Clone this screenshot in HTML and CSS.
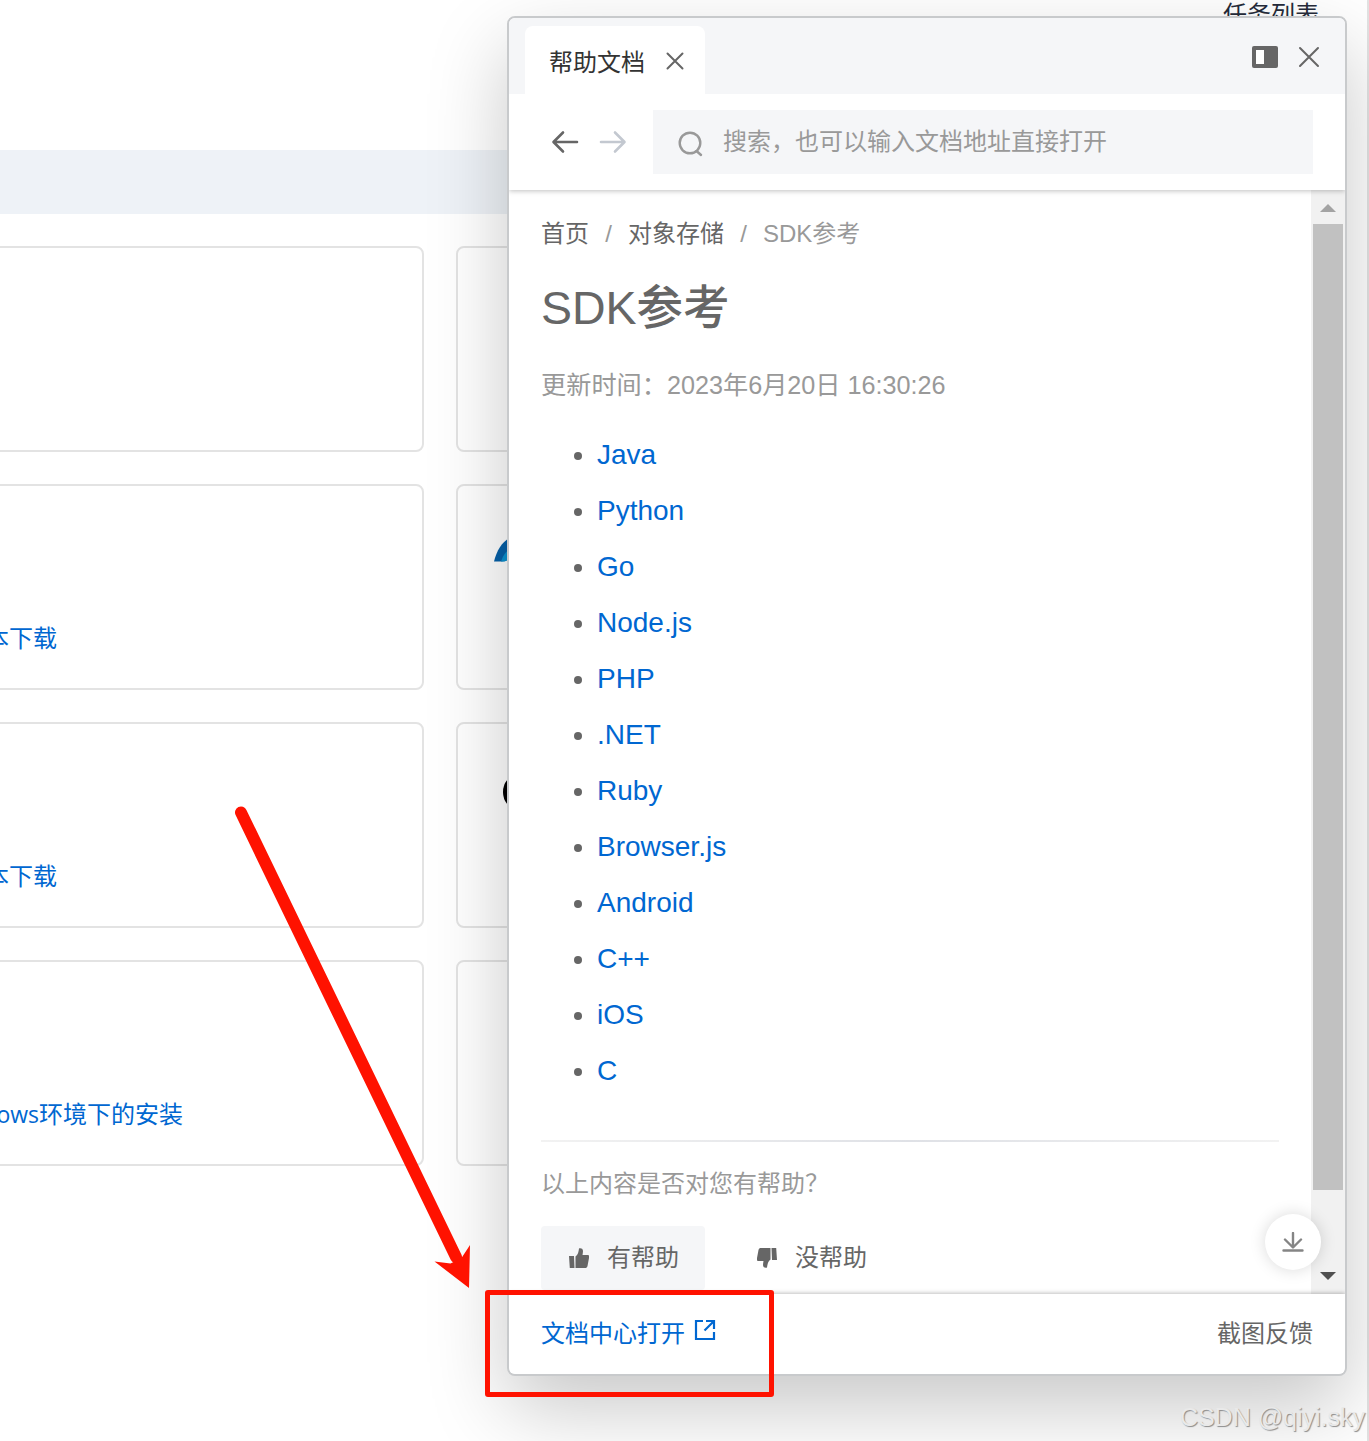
FILE: index.html
```
<!DOCTYPE html>
<html lang="zh-CN">
<head>
    <meta charset="UTF-8">
    <meta name="viewport" content="width=device-width, initial-scale=1.0">
    <title>帮助文档</title>
    <link rel="stylesheet" href="styles.css">
</head>
<body>
    <!-- Page behind the help window -->
    <main class="page">
        <header class="page-top">任务列表</header>
        <div class="band"></div>
        <div class="card-grid">
            <div class="card"></div>
            <div class="card"></div>
            <div class="card"><a class="card-link short">本下载</a></div>
            <div class="card">
                <svg class="card-logo" width="40" height="40" viewBox="0 0 40 40">
                    <path d="M0 23.500C3 12 8 3 18 -1V18C15 23 10 24 0 23.500Z" fill="#0560a8"/>
                    <path d="M7 23.500C9 18 11 14 18 9V18C14 23 11 24 7 23.500Z" fill="#0b91cf"/>
                </svg>
            </div>
            <div class="card"><a class="card-link short">本下载</a></div>
            <div class="card">
                <svg class="card-logo dark" width="34" height="34" viewBox="0 0 34 34"><ellipse cx="14" cy="17" rx="14" ry="17" fill="#000"/></svg>
            </div>
            <div class="card"><a class="card-link long"><span>ows</span>环境下的安装</a></div>
            <div class="card"></div>
        </div>
    </main>

    <!-- Help window -->
    <section class="help-window">
        <div class="tab-bar">
            <div class="tab">
                <span>帮助文档</span>
                <svg width="18" height="18" viewBox="0 0 18 18"><path d="M1.500 1.500l15 15M16.500 1.500l-15 15"/></svg>
            </div>
            <div class="window-actions">
                <svg width="26" height="22" viewBox="0 0 26 22"><rect width="26" height="22" rx="2" fill="#666"/><rect x="4" y="4" width="8" height="14" fill="#fff"/></svg>
                <svg class="close" width="22" height="22" viewBox="0 0 22 22"><path d="M2 2l18 18M20 2L2 20"/></svg>
            </div>
        </div>

        <div class="toolbar">
            <svg class="arrow" width="28" height="24" viewBox="0 0 28 24"><path d="M26 12H3M12 2.500L2.500 12l9.500 9.500"/></svg>
            <svg class="arrow disabled" width="28" height="24" viewBox="0 0 28 24"><path d="M2 12h23M16 2.500l9.500 9.500-9.500 9.500"/></svg>
            <div class="search">
                <svg width="26" height="26" viewBox="0 0 26 26"><circle cx="12" cy="12" r="10.300"/><path d="M18.500 20l4.500 4"/></svg>
                <span>搜索，也可以输入文档地址直接打开</span>
            </div>
        </div>

        <div class="content">
            <article class="doc">
                <nav class="breadcrumb">
                    <a>首页</a><i>/</i><a>对象存储</a><i>/</i><span>SDK参考</span>
                </nav>
                <h1>SDK参考</h1>
                <p class="updated">更新时间：2023年6月20日 16:30:26</p>
                <ul class="sdk-list">
                    <li><a>Java</a></li>
                    <li><a>Python</a></li>
                    <li><a>Go</a></li>
                    <li><a>Node.js</a></li>
                    <li><a>PHP</a></li>
                    <li><a>.NET</a></li>
                    <li><a>Ruby</a></li>
                    <li><a>Browser.js</a></li>
                    <li><a>Android</a></li>
                    <li><a>C++</a></li>
                    <li><a>iOS</a></li>
                    <li><a>C</a></li>
                </ul>
                <div class="divider"></div>
                <p class="question">以上内容是否对您有帮助？</p>
                <div class="votes">
                    <button class="vote active">
                        <svg width="20" height="20" viewBox="0 0 20 20"><path d="M0 8h5l.500 12H.800zM6.500 8.500C9 7 9.500 4 10 .500 11 0 14 0 14 3c0 1.500-.300 2.500-.500 4h5.500c1.200 0 1.200 1.500 1 3l-1.500 8c-.500 1.500-1 2-2.500 2H6.500z"/></svg>
                        <span>有帮助</span>
                    </button>
                    <button class="vote">
                        <svg width="20" height="20" viewBox="0 0 20 20"><g transform="rotate(180 10 10)"><path d="M0 8h5l.500 12H.800zM6.500 8.500C9 7 9.500 4 10 .500 11 0 14 0 14 3c0 1.500-.300 2.500-.500 4h5.500c1.200 0 1.200 1.500 1 3l-1.500 8c-.500 1.500-1 2-2.500 2H6.500z"/></g></svg>
                        <span>没帮助</span>
                    </button>
                </div>
            </article>
            <div class="scrollbar">
                <svg width="16" height="8" viewBox="0 0 16 8"><path d="M8 0l8 8H0z" fill="#a3a3a3"/></svg>
                <div class="thumb"></div>
                <svg class="down" width="16" height="8" viewBox="0 0 16 8"><path d="M0 0h16L8 8z" fill="#505050"/></svg>
            </div>
            <div class="to-bottom">
                <svg width="22" height="20" viewBox="0 0 22 20"><path d="M11 1v14M3 7.500l8 8 8-8M1.500 18.500h19"/></svg>
            </div>
        </div>

        <footer class="help-footer">
            <a class="open-doc"><span>文档中心打开</span>
                <svg width="22" height="22" viewBox="0 0 22 22"><path d="M9 2H2v18h18v-7M12 2h8v8M20 2l-9.500 9.500"/></svg>
            </a>
            <a class="feedback">截图反馈</a>
        </footer>
    </section>

    <!-- Markers -->
    <svg class="red-arrow" width="260" height="500" viewBox="0 0 260 500">
        <path d="M21 6.500L236 451" stroke="#ff1200" stroke-width="12" stroke-linecap="round"/>
        <path d="M214.500 449.500L230.500 451.500 241.500 446 250 433 249 476z" fill="#ff1200"/>
    </svg>
    <div class="red-box"></div>
    <div class="watermark">CSDN @qiyi.sky</div>
</body>
</html>
```
FILE: styles.css
```
* {
    margin: 0;
    padding: 0;
    box-sizing: border-box;
}

body {
    position: relative;
    width: 1369px;
    height: 1441px;
    overflow: hidden;
    background-color: #fff;
    font-family: "Liberation Sans", "Noto Sans CJK SC", sans-serif;
    font-size: 24px;
    color: #666;
}

svg {
    display: block;
    flex: none;
    fill: none;
}

/* Page behind */
.page {
    height: 1441px;
    border-right: 2px solid #e3e3e3;
}

.page-top {
    height: 150px;
    padding: 1px 48px 0 0;
    line-height: 28px;
    text-align: right;
    color: #252b3a;
}

.band {
    width: 1300px;
    height: 64px;
    background-color: #eef2f7;
}

.card-grid {
    display: grid;
    grid-template-columns: 432px 600px;
    grid-auto-rows: 206px;
    gap: 32px;
    margin: 32px 0 0 -8px;
}

.card {
    border: 2px solid #e3e3e3;
    border-radius: 8px;
    padding-top: 134px;
}

.card-link {
    display: block;
    margin-left: -30px;
    line-height: 37px;
    text-align: right;
    white-space: nowrap;
    color: #0067d1;
}

.card-link span {
    font-family: "Open Sans", sans-serif;
    font-size: 23px;
}

.card-link.short {
    width: 93px;
    line-height: 38px;
}

.card-link.long {
    width: 219px;
}

.card-logo {
    margin: -82px 0 0 36px;
}

.card-logo.dark {
    margin: -83px 0 0 45px;
}

/* Help window */
.help-window {
    position: absolute;
    top: 16px;
    left: 507px;
    width: 840px;
    height: 1360px;
    display: flex;
    flex-direction: column;
    overflow: hidden;
    background-color: #fff;
    border: 2px solid #c8cacc;
    border-radius: 8px;
    box-shadow: 0 32px 80px rgba(0, 0, 0, 0.22);
}

.tab-bar {
    position: relative;
    z-index: 2;
    height: 76px;
    flex: none;
    display: flex;
    justify-content: space-between;
    padding: 8px 25px 0 16px;
    background-color: #f5f6f8;
}

.tab {
    width: 180px;
    display: flex;
    align-items: center;
    gap: 21px;
    padding: 2px 0 0 24px;
    background-color: #fff;
    border-radius: 8px 8px 0 0;
    color: #333;
}

.tab span {
    margin-bottom: 2px;
}

.tab svg,
.window-actions .close {
    stroke: #666;
    stroke-width: 2;
    stroke-linecap: round;
}

.window-actions {
    height: 62px;
    display: flex;
    align-items: center;
    gap: 20px;
}

.toolbar {
    position: relative;
    z-index: 1;
    height: 96px;
    flex: none;
    display: flex;
    align-items: center;
    padding: 0 32px 0 42px;
    background-color: #fff;
    box-shadow: 0 1px 5px rgba(0, 0, 0, 0.25);
}

.arrow {
    margin-right: 20px;
    stroke: #666;
    stroke-width: 2.6;
    stroke-linecap: round;
    stroke-linejoin: round;
}

.arrow.disabled {
    margin-right: 26px;
    stroke: #c3c8d0;
}

.search {
    flex: 1;
    height: 64px;
    display: flex;
    align-items: center;
    gap: 19px;
    padding-left: 25px;
    background-color: #f5f6f8;
    color: #999;
}

.search span {
    margin-bottom: 5px;
}

.search svg {
    margin-top: 4px;
    stroke: #999;
    stroke-width: 2.4;
    stroke-linecap: round;
}

.content {
    position: relative;
    flex: 1;
    min-height: 0;
    display: flex;
}

.doc {
    flex: 1;
    padding: 25px 32px 0;
}

.breadcrumb {
    display: flex;
    line-height: 38px;
}

.breadcrumb i {
    width: 39px;
    font-style: normal;
    text-align: center;
    color: #999;
}

.breadcrumb span {
    color: #999;
}

h1 {
    margin-top: 19px;
    font-size: 46.5px;
    font-weight: 500;
    line-height: 72px;
}

.updated {
    margin-top: 21px;
    font-size: 25.2px;
    line-height: 40px;
    color: #999;
}

.sdk-list {
    margin-top: 22px;
    list-style: none;
}

.sdk-list li {
    height: 56px;
    display: flex;
    align-items: center;
    gap: 15px;
    padding-left: 33px;
    font-size: 28px;
}

.sdk-list li::before {
    content: "";
    width: 8px;
    height: 8px;
    margin-top: 1px;
    border-radius: 50%;
    background-color: #666;
}

.sdk-list a,
.open-doc {
    color: #0067d1;
}

.divider {
    height: 2px;
    margin-top: 41px;
    background: linear-gradient(90deg, #f2f2f2, #dfe1e6 50%, #f2f2f2);
}

.question {
    margin-top: 22px;
    line-height: 40px;
    color: #999;
}

.votes {
    display: flex;
    gap: 24px;
    margin-top: 22px;
}

.vote {
    width: 164px;
    height: 64px;
    display: flex;
    align-items: center;
    gap: 18px;
    padding-left: 28px;
    border: none;
    border-radius: 4px;
    background: none;
    font: inherit;
    color: #666;
}

.vote span {
    margin-bottom: 6px;
}

.vote.active {
    background-color: #f5f6f8;
}

.vote svg {
    fill: #666;
}

/* Scrollbar */
.scrollbar {
    width: 34px;
    display: flex;
    flex-direction: column;
    align-items: center;
    padding-top: 14px;
    background-color: #f1f1f1;
}

.thumb {
    width: 30px;
    height: 966px;
    margin-top: 12px;
    background-color: #c1c1c1;
}

.scrollbar .down {
    margin-top: 82px;
}

.to-bottom {
    position: absolute;
    right: 24px;
    bottom: 24px;
    width: 56px;
    height: 56px;
    display: flex;
    align-items: center;
    justify-content: center;
    border-radius: 50%;
    background-color: #fff;
    box-shadow: 0 0 16px rgba(0, 0, 0, 0.15);
}

.to-bottom svg {
    stroke: #858585;
    stroke-width: 2.4;
    stroke-linecap: round;
    stroke-linejoin: round;
}

.help-footer {
    position: relative;
    height: 80px;
    flex: none;
    display: flex;
    align-items: center;
    justify-content: space-between;
    padding: 0 32px;
    background-color: #fff;
    box-shadow: 0 -1px 4px rgba(0, 0, 0, 0.25);
}

.open-doc {
    display: flex;
    align-items: center;
    gap: 9px;
}

.open-doc span,
.feedback {
    margin-bottom: 6px;
}

.open-doc svg {
    margin-bottom: 8px;
    stroke: #0067d1;
    stroke-width: 2.2;
}

/* Markers drawn over everything */
.red-arrow {
    position: absolute;
    left: 220px;
    top: 806px;
    overflow: visible;
}

.red-arrow path:last-child {
    transform: translateY(6px);
}

.red-box {
    position: absolute;
    left: 485px;
    top: 1290px;
    width: 289px;
    height: 107px;
    border: 5px solid #ff1200;
    border-radius: 3px;
}

.watermark {
    position: absolute;
    right: 4px;
    bottom: 9px;
    font-size: 25px;
    line-height: 30px;
    color: #e9e9e9;
    text-shadow: 1px 1px 1px #8c8c8c;
}
```
